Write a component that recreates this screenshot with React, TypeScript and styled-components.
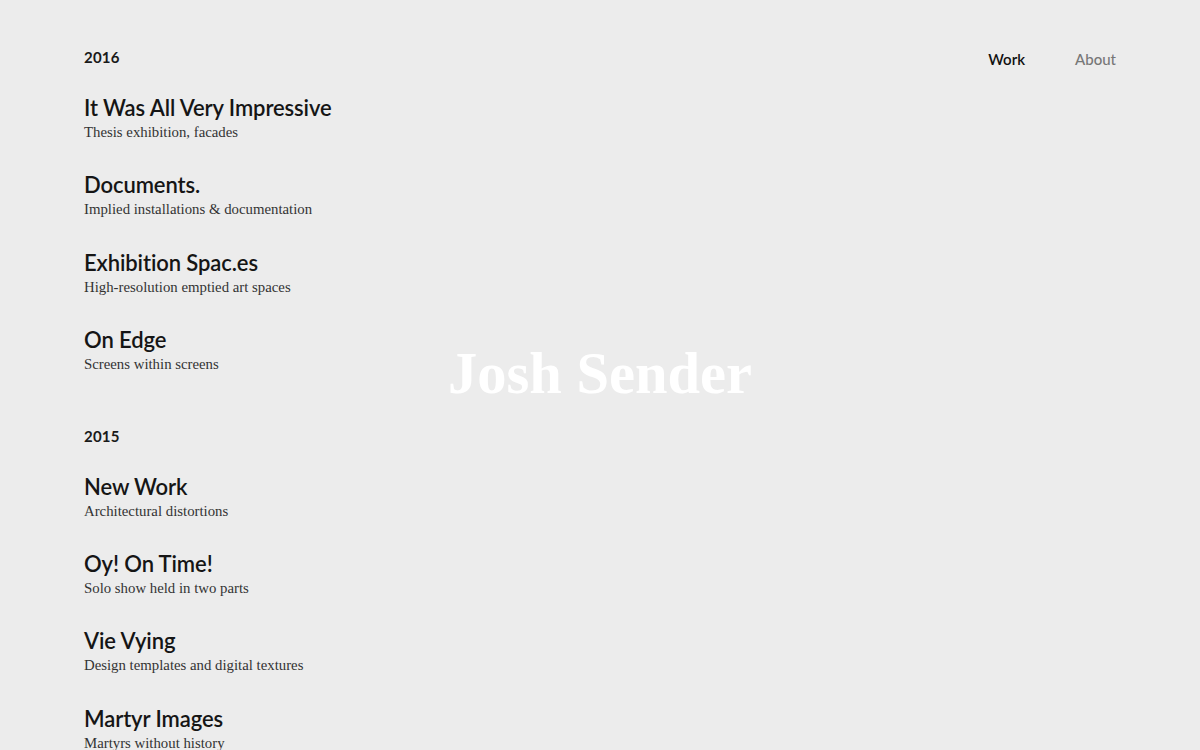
import React from 'react';
import styled, { createGlobalStyle } from 'styled-components';

const GlobalStyle = createGlobalStyle`
  html, body {
    margin: 0;
    padding: 0;
    background: #ececec;
  }
`;

const Page = styled.div`
  display: flex;
  justify-content: space-between;
  align-items: flex-start;
  padding: 47px 84px 0 84px;
  min-height: 750px;
  box-sizing: border-box;
  background: #ececec;
`;

const WorkList = styled.main`
  display: flex;
  flex-direction: column;
`;

const YearGroup = styled.section`
  display: flex;
  flex-direction: column;
  margin-bottom: 22px;
`;

const Year = styled.h2`
  margin: 0 0 27px 0;
  font-family: Lato, "Open Sans", sans-serif;
  font-size: 15px;
  font-weight: 700;
  line-height: 20px;
  letter-spacing: 0.2px;
  color: #1a1a1a;
`;

const Project = styled.a`
  display: flex;
  flex-direction: column;
  margin-bottom: 28.4px;
  text-decoration: none;
`;

const ProjectTitle = styled.span`
  font-family: Lato, "Open Sans", sans-serif;
  font-size: 22px;
  font-weight: 600;
  line-height: 28px;
  letter-spacing: -0.1px;
  color: #151515;
`;

const ProjectNote = styled.span`
  font-family: "Liberation Serif", serif;
  font-size: 14.8px;
  line-height: 21px;
  color: #333;
`;

const Nav = styled.nav`
  display: flex;
  gap: 50px;
  padding-top: 2px;
`;

const NavLink = styled.a<{ $active?: boolean }>`
  font-family: Lato, "Open Sans", sans-serif;
  font-size: 15px;
  font-weight: ${p => (p.$active ? 600 : 500)};
  line-height: 20px;
  color: ${p => (p.$active ? '#111' : '#777')};
  text-decoration: none;
`;

const Name = styled.h1`
  position: fixed;
  top: 50%;
  left: 50%;
  transform: translate(-50%, -52%);
  margin: 0;
  font-family: "Liberation Serif", serif;
  font-size: 58.5px;
  font-weight: 700;
  color: #fff;
  white-space: nowrap;
  pointer-events: none;
`;

const works = [
  {
    year: '2016',
    projects: [
      ['It Was All Very Impressive', 'Thesis exhibition, facades'],
      ['Documents.', 'Implied installations & documentation'],
      ['Exhibition Spac.es', 'High-resolution emptied art spaces'],
      ['On Edge', 'Screens within screens'],
    ],
  },
  {
    year: '2015',
    projects: [
      ['New Work', 'Architectural distortions'],
      ['Oy! On Time!', 'Solo show held in two parts'],
      ['Vie Vying', 'Design templates and digital textures'],
      ['Martyr Images', 'Martyrs without history'],
    ],
  },
];

const App: React.FC = () => {
  return (
    <>
      <GlobalStyle />
      <Page>
        <WorkList>
          {works.map(group => (
            <YearGroup key={group.year}>
              <Year>{group.year}</Year>
              {group.projects.map(([title, note]) => (
                <Project key={title} href="#">
                  <ProjectTitle>{title}</ProjectTitle>
                  <ProjectNote>{note}</ProjectNote>
                </Project>
              ))}
            </YearGroup>
          ))}
        </WorkList>
        <Nav>
          <NavLink $active href="#">Work</NavLink>
          <NavLink href="#">About</NavLink>
        </Nav>
      </Page>
      <Name>Josh Sender</Name>
    </>
  );
};

export default App;
